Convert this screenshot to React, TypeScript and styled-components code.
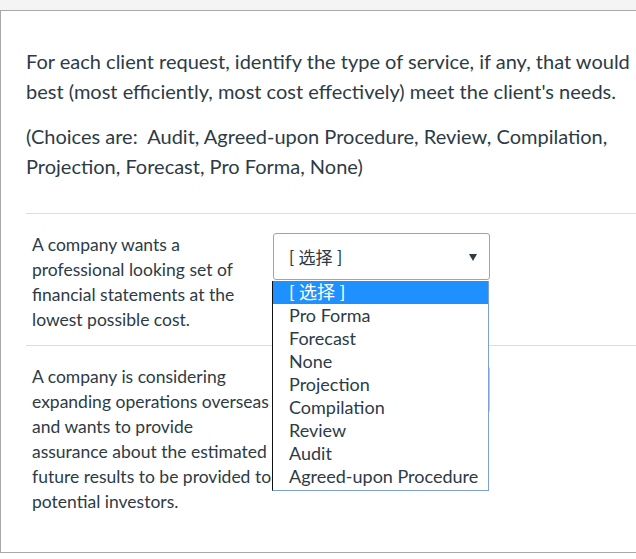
import React from 'react';
import styled, { createGlobalStyle } from 'styled-components';

const GlobalStyle = createGlobalStyle`
  html, body {
    margin: 0;
    padding: 0;
    background: #fff;
    overflow: hidden;
  }
  body {
    font-family: Lato, "Noto Sans", "Liberation Sans", "Noto Sans CJK SC", sans-serif;
    color: #2d3b45;
  }
`;

const Page = styled.div`
  width: 660px;
  height: 559px;
`;

const TopBar = styled.div`
  height: 10px;
  background: #f4f4f4;
  border-bottom: 1px solid #a8a8a8;
`;

const Panel = styled.div`
  box-sizing: border-box;
  height: 542px;
  border-left: 1px solid #a8a8a8;
  border-bottom: 1px solid #a8a8a8;
  padding: 35px 0 0 25px;
`;

const Intro = styled.p<{ $gap?: number }>`
  margin: 0 0 ${(p) => p.$gap ?? 0}px 0;
  font-size: 20px;
  line-height: 30px;
  width: 618px;
`;

const Rows = styled.div`
  margin-top: 32px;
  border-top: 1px solid #dddddd;
`;

const Row = styled.div<{ $top: number; $bottom: number }>`
  display: grid;
  grid-template-columns: 241px 217px;
  padding: ${(p) => p.$top}px 0 ${(p) => p.$bottom}px 6px;
  border-bottom: ${(p) => (p.$bottom ? '1px solid #dddddd' : 'none')};
`;

const Question = styled.div`
  font-size: 17.5px;
  line-height: 25px;
`;

const SelectWrap = styled.div<{ $offset?: number }>`
  position: relative;
  margin-top: ${(p) => p.$offset ?? 1}px;
`;

const SelectBox = styled.div<{ $focused?: boolean }>`
  box-sizing: border-box;
  height: 47px;
  border: 1px solid ${(p) => (p.$focused ? '#7ea8e8' : '#c8c8c8')};
  border-radius: 3px;
  display: flex;
  align-items: center;
  justify-content: space-between;
  padding: 0 12px 0 15px;
  font-size: 17px;
  color: #2d3b45;
  background: #fff;
`;

const Arrow = styled.span`
  width: 0;
  height: 0;
  border-left: 4px solid transparent;
  border-right: 4px solid transparent;
  border-top: 7px solid #2d3b45;
  margin-top: 1px;
`;

const DropList = styled.ul`
  position: absolute;
  top: 48px;
  left: -1px;
  width: 217px;
  box-sizing: border-box;
  margin: 0;
  padding: 0 0 2px 0;
  list-style: none;
  background: #fff;
  border: 1px solid #7b9fd6;
  border-left-color: #111;
  border-top: none;
  z-index: 5;
`;

const Option = styled.li<{ $active?: boolean }>`
  height: 23px;
  line-height: 23px;
  padding-left: 16px;
  font-size: 18px;
  background: ${(p) => (p.$active ? '#1e90ff' : 'transparent')};
  color: ${(p) => (p.$active ? '#fff' : '#2d3b45')};
  white-space: nowrap;
`;

const options = [
  '[ 选择 ]',
  'Pro Forma',
  'Forecast',
  'None',
  'Projection',
  'Compilation',
  'Review',
  'Audit',
  'Agreed-upon Procedure',
];

export default function App() {
  return (
    <Page>
      <GlobalStyle />
      <TopBar />
      <Panel>
        <Intro $gap={15}>
          For each client request, identify the type of service, if any, that would best (most
          efficiently, most cost effectively) meet the client's needs.
        </Intro>
        <Intro>
          (Choices are:&nbsp; Audit, Agreed-upon Procedure, Review, Compilation, Projection,
          Forecast, Pro Forma, None)
        </Intro>
        <Rows>
          <Row $top={18} $bottom={13}>
            <Question>
              A company wants a professional looking set of financial statements at the lowest
              possible cost.
            </Question>
            <SelectWrap>
              <SelectBox $focused>
                <span>[ 选择 ]</span>
                <Arrow />
              </SelectBox>
              <DropList>
                {options.map((o, i) => (
                  <Option key={o} $active={i === 0}>
                    {o}
                  </Option>
                ))}
              </DropList>
            </SelectWrap>
          </Row>
          <Row $top={18} $bottom={0}>
            <Question>
              A company is considering expanding operations overseas and wants to provide
              assurance about the estimated future results to be provided to potential
              investors.
            </Question>
            <SelectWrap $offset={2}>
              <SelectBox>
                <span>[ 选择 ]</span>
                <Arrow />
              </SelectBox>
            </SelectWrap>
          </Row>
        </Rows>
      </Panel>
    </Page>
  );
}
